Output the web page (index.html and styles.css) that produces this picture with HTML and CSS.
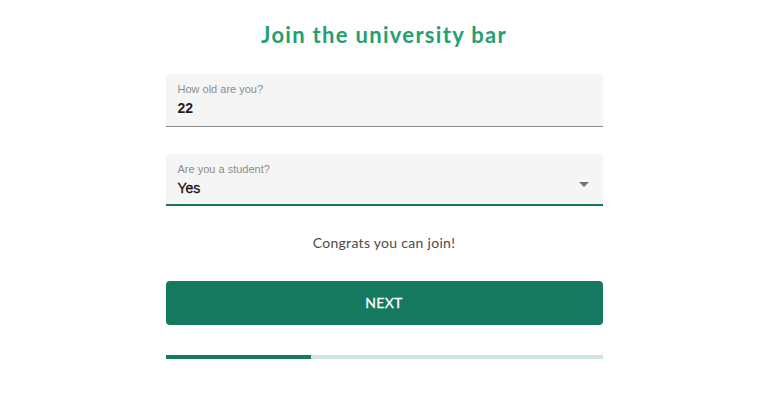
FILE: index.html
```html
<!DOCTYPE html>
<html>
<head>
<meta charset="utf-8">
<link rel="stylesheet" href="styles.css">
</head>
<body>
<main class="page">
  <h1 class="title">Join the university bar</h1>
  <form class="form">
    <div class="field">
      <span class="label">How old are you?</span>
      <span class="value">22</span>
    </div>
    <div class="field field-select">
      <div class="field-text">
        <span class="label">Are you a student?</span>
        <span class="value">Yes</span>
      </div>
      <span class="arrow"></span>
    </div>
    <p class="message">Congrats you can join!</p>
    <button type="button" class="next">NEXT</button>
    <div class="progress"><div class="progress-fill" style="width:33.3%"></div></div>
  </form>
</main>
</body>
</html>
```
FILE: styles.css
```css
html, body {
  margin: 0;
  padding: 0;
  background: #ffffff;
}
.page {
  width: 437px;
  margin: 0 auto;
  padding-top: 20px;
  display: flex;
  flex-direction: column;
}
.title {
  margin: 0;
  text-align: center;
  font-family: "Lato", sans-serif;
  font-weight: 700;
  font-size: 22px;
  line-height: 30px;
  letter-spacing: 1.3px;
  color: #22a072;
}
.form {
  display: flex;
  flex-direction: column;
  margin-top: 24px;
}
.field {
  height: 53px;
  background: #f5f5f5;
  border-radius: 4px 4px 0 0;
  border-bottom: 1px solid #8a8a8a;
  box-sizing: border-box;
  padding: 8px 12px 0 12px;
  display: flex;
  flex-direction: column;
  font-family: "Liberation Sans", Arial, sans-serif;
}
.field-select {
  margin-top: 27px;
  height: 52px;
  border-bottom: 2px solid #157a5f;
  flex-direction: row;
  align-items: flex-start;
  justify-content: space-between;
}
.field-text {
  display: flex;
  flex-direction: column;
}
.label {
  font-size: 11px;
  line-height: 14px;
  color: #8d8d8d;
}
.value {
  margin-top: 3px;
  font-size: 14px;
  line-height: 18px;
  font-weight: 700;
  color: #1f1f1f;
}
.field-select .value {
  font-weight: 400;
  color: #111;
  -webkit-text-stroke: 0.3px #111;
}
.arrow {
  width: 0;
  height: 0;
  margin-top: 20px;
  margin-right: 2px;
  border-left: 5px solid transparent;
  border-right: 5px solid transparent;
  border-top: 5px solid #757575;
}
.message {
  margin: 28px 0 0 0;
  text-align: center;
  font-family: "Lato", sans-serif;
  font-size: 14px;
  line-height: 18px;
  color: #4a4a4a;
  letter-spacing: 0.3px;
}
.next {
  margin-top: 29px;
  height: 44px;
  border: none;
  border-radius: 4px;
  background: #14795e;
  color: #ffffff;
  font-family: "Lato", sans-serif;
  font-size: 14px;
  font-weight: 400;
  -webkit-text-stroke: 0.3px #ffffff;
  letter-spacing: 0.3px;
  padding: 0 0 2px 0;
}
.progress {
  margin-top: 30px;
  height: 4px;
  background: #cfe5de;
}
.progress-fill {
  height: 100%;
  background: #157a5f;
}
```
